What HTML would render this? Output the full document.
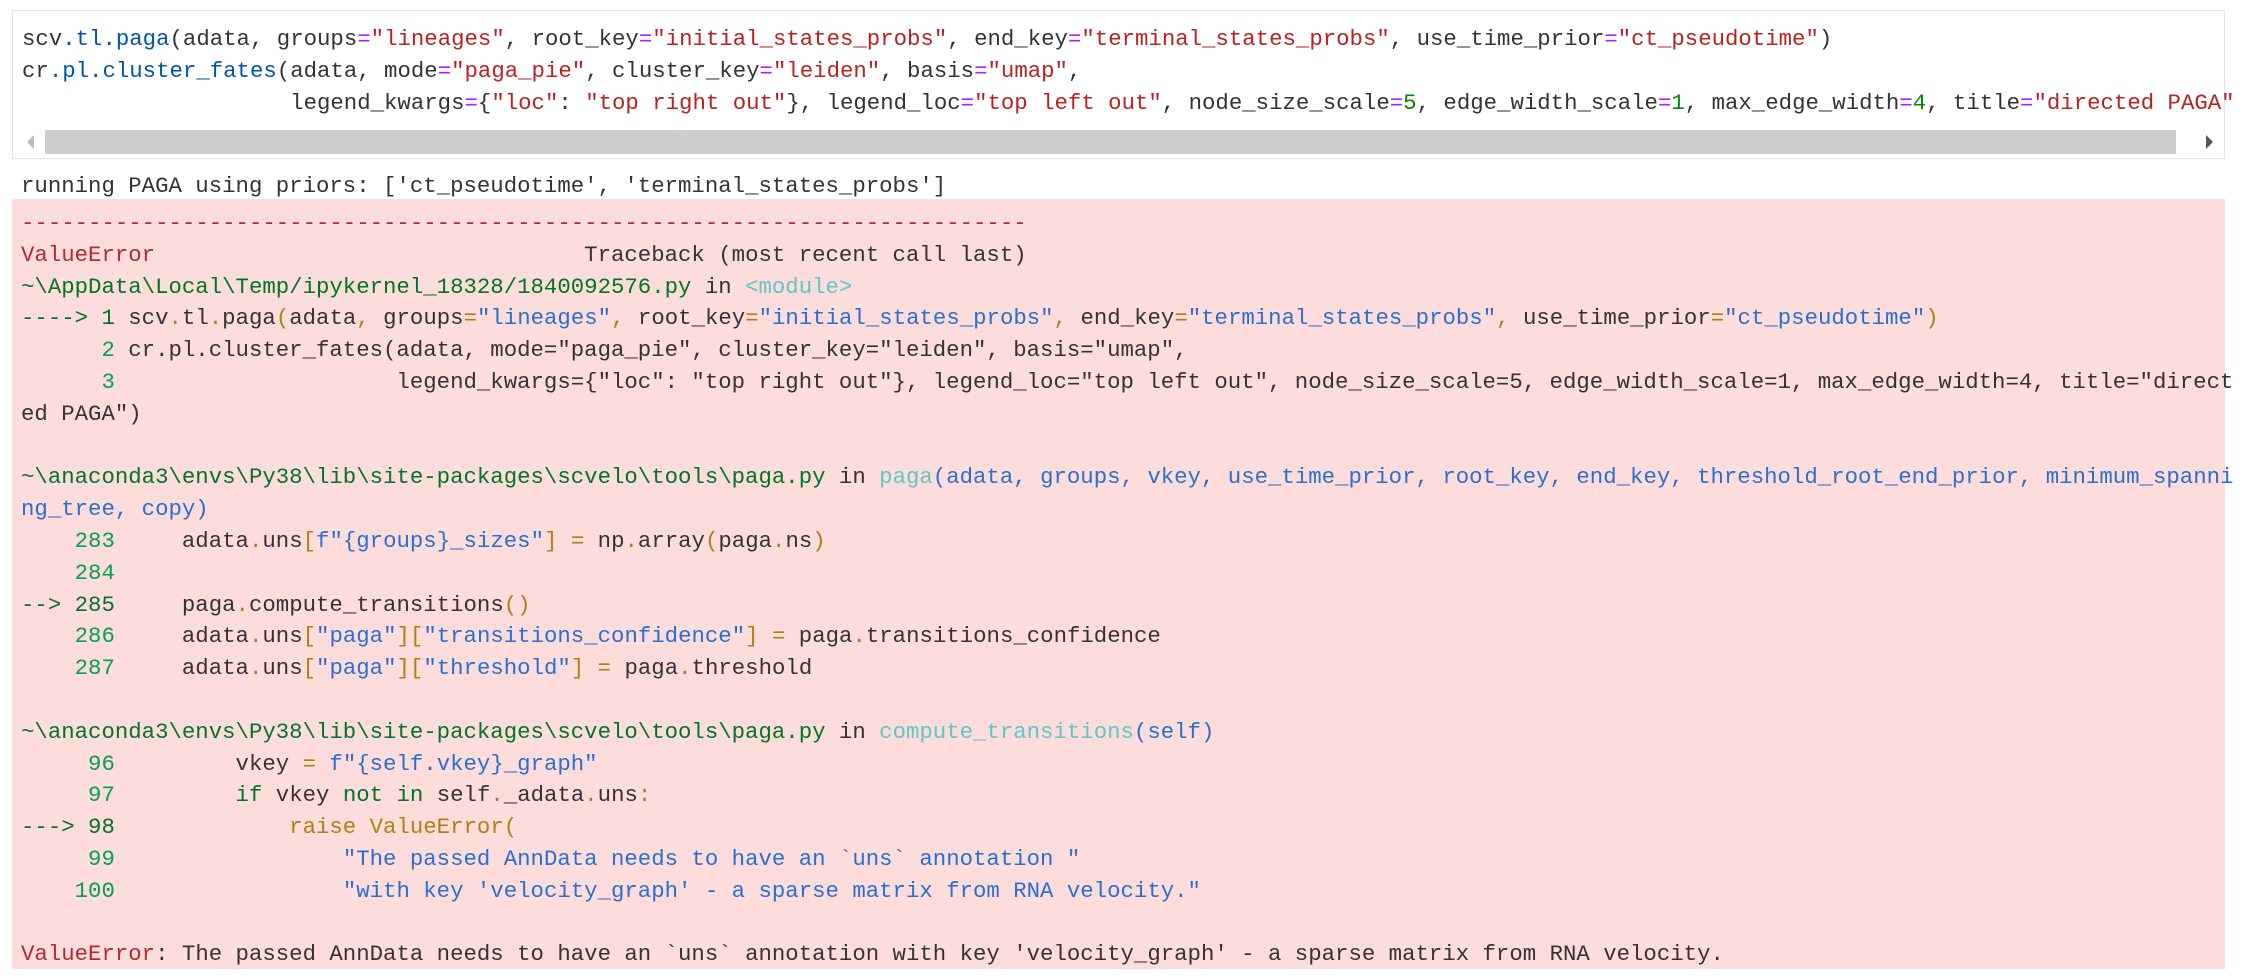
<!DOCTYPE html>
<html><head><meta charset="utf-8"><style>
html,body{margin:0;padding:0;background:#fff;width:2242px;height:980px;overflow:hidden}
pre{margin:0;font-family:"Liberation Mono",monospace;font-size:22.35px;white-space:pre}
#inbox{position:absolute;left:12px;top:10px;width:2211px;height:147px;border:1px solid #e4e4e4;background:#fff}
#code{position:absolute;left:9px;top:12px;line-height:32px;color:#333}
#track{position:absolute;left:32px;top:119px;width:2131px;height:24px;background:#cdcdcd}
.arr{position:absolute;top:124px;width:0;height:0;border-top:7px solid transparent;border-bottom:7px solid transparent}
#run{position:absolute;left:21px;top:170px;line-height:32px;color:#333}
#err{position:absolute;left:12px;top:199px;width:2213px;height:770px;background:#fddcdc}
#tb{position:absolute;left:9px;top:9px;line-height:31.8px;color:#333}
.a{color:#0055aa}.e{color:#aa22ff}.s{color:#ba2121}.n{color:#008800}
.r{color:#b22b31}.g{color:#007427}.G{color:#00a250}.c{color:#60c6c8}.b{color:#2a6fd0}.y{color:#b27d12}
</style></head><body>
<div id="inbox">
<pre id="code">scv<span class="a">.tl.paga</span>(adata, groups<span class="e">=</span><span class="s">"lineages"</span>, root_key<span class="e">=</span><span class="s">"initial_states_probs"</span>, end_key<span class="e">=</span><span class="s">"terminal_states_probs"</span>, use_time_prior<span class="e">=</span><span class="s">"ct_pseudotime"</span>)
cr<span class="a">.pl.cluster_fates</span>(adata, mode<span class="e">=</span><span class="s">"paga_pie"</span>, cluster_key<span class="e">=</span><span class="s">"leiden"</span>, basis<span class="e">=</span><span class="s">"umap"</span>,
                    legend_kwargs<span class="e">=</span>{<span class="s">"loc"</span>: <span class="s">"top right out"</span>}, legend_loc<span class="e">=</span><span class="s">"top left out"</span>, node_size_scale<span class="e">=</span><span class="n">5</span>, edge_width_scale<span class="e">=</span><span class="n">1</span>, max_edge_width<span class="e">=</span><span class="n">4</span>, title<span class="e">=</span><span class="s">"directed PAGA"</span></pre>
<div id="track"></div>
<div class="arr" style="left:14px;border-right:7px solid #bbb"></div>
<div class="arr" style="left:2193px;border-left:7px solid #555"></div>
</div>
<pre id="run">running PAGA using priors: ['ct_pseudotime', 'terminal_states_probs']</pre>
<div id="err">
<pre id="tb"><span class="r">---------------------------------------------------------------------------</span>
<span class="r">ValueError</span>                                Traceback (most recent call last)
<span class="g">~\AppData\Local\Temp/ipykernel_18328/1840092576.py</span> in <span class="c">&lt;module&gt;</span>
<span class="g">----&gt; 1</span> scv<span class="y">.</span>tl<span class="y">.</span>paga<span class="y">(</span>adata<span class="y">,</span> groups<span class="y">=</span><span class="b">"lineages"</span><span class="y">,</span> root_key<span class="y">=</span><span class="b">"initial_states_probs"</span><span class="y">,</span> end_key<span class="y">=</span><span class="b">"terminal_states_probs"</span><span class="y">,</span> use_time_prior<span class="y">=</span><span class="b">"ct_pseudotime"</span><span class="y">)</span>
<span class="G">      2</span> cr.pl.cluster_fates(adata, mode="paga_pie", cluster_key="leiden", basis="umap",
<span class="G">      3</span>                     legend_kwargs={"loc": "top right out"}, legend_loc="top left out", node_size_scale=5, edge_width_scale=1, max_edge_width=4, title="direct
ed PAGA")

<span class="g">~\anaconda3\envs\Py38\lib\site-packages\scvelo\tools\paga.py</span> in <span class="c">paga</span><span class="b">(adata, groups, vkey, use_time_prior, root_key, end_key, threshold_root_end_prior, minimum_spanni
ng_tree, copy)</span>
<span class="G">    283</span>     adata<span class="y">.</span>uns<span class="y">[</span><span class="b">f"{groups}_sizes"</span><span class="y">]</span> <span class="y">=</span> np<span class="y">.</span>array<span class="y">(</span>paga<span class="y">.</span>ns<span class="y">)</span>
<span class="G">    284</span>
<span class="g">--&gt; 285</span>     paga<span class="y">.</span>compute_transitions<span class="y">()</span>
<span class="G">    286</span>     adata<span class="y">.</span>uns<span class="y">[</span><span class="b">"paga"</span><span class="y">][</span><span class="b">"transitions_confidence"</span><span class="y">]</span> <span class="y">=</span> paga<span class="y">.</span>transitions_confidence
<span class="G">    287</span>     adata<span class="y">.</span>uns<span class="y">[</span><span class="b">"paga"</span><span class="y">][</span><span class="b">"threshold"</span><span class="y">]</span> <span class="y">=</span> paga<span class="y">.</span>threshold

<span class="g">~\anaconda3\envs\Py38\lib\site-packages\scvelo\tools\paga.py</span> in <span class="c">compute_transitions</span><span class="b">(self)</span>
<span class="G">     96</span>         vkey <span class="y">=</span> <span class="b">f"{self.vkey}_graph"</span>
<span class="G">     97</span>         <span class="g">if</span> vkey <span class="g">not</span> <span class="g">in</span> self<span class="y">.</span>_adata<span class="y">.</span>uns<span class="y">:</span>
<span class="g">---&gt; 98</span>             <span class="y">raise</span> <span class="y">ValueError(</span>
<span class="G">     99</span>                 <span class="b">"The passed AnnData needs to have an `uns` annotation "</span>
<span class="G">    100</span>                 <span class="b">"with key 'velocity_graph' - a sparse matrix from RNA velocity."</span>

<span class="r">ValueError</span>: The passed AnnData needs to have an `uns` annotation with key 'velocity_graph' - a sparse matrix from RNA velocity.</pre>
</div>
</body></html>
